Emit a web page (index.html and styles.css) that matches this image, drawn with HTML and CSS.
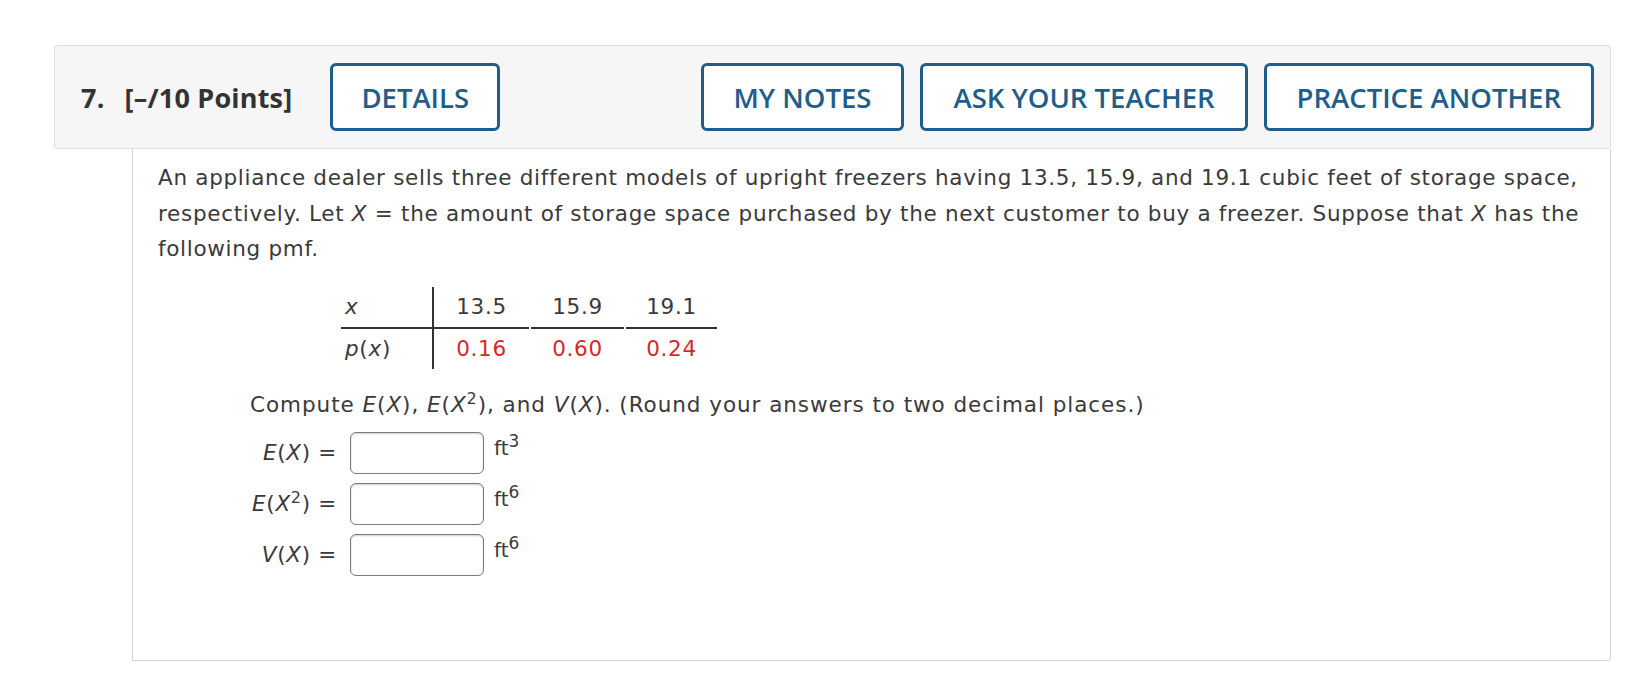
FILE: index.html
```html
<!DOCTYPE html>
<html lang="en">
<head>
<meta charset="utf-8">
<title>Question 7</title>
<link rel="stylesheet" href="styles.css">
</head>
<body>
<div class="page">
  <div class="qhead">
    <div class="qtitle"><span class="qnum">7.</span><span class="qpts">[–/10 Points]</span></div>
    <button class="btn btn-details">DETAILS</button>
    <div class="spacer"></div>
    <div class="btn-group">
      <button class="btn">MY NOTES</button>
      <button class="btn">ASK YOUR TEACHER</button>
      <button class="btn">PRACTICE ANOTHER</button>
    </div>
  </div>
  <div class="qbody">
    <p class="intro">An appliance dealer sells three different models of upright freezers having 13.5, 15.9, and 19.1 cubic feet of storage space, respectively. Let <i>X</i> = the amount of storage space purchased by the next customer to buy a freezer. Suppose that <i>X</i> has the following pmf.</p>
    <div class="pmf">
      <div class="cell c-label head"><i>x</i></div>
      <div class="cell c-first head">13.5</div>
      <div class="cell head">15.9</div>
      <div class="cell head">19.1</div>
      <div class="cell c-label"><i>p</i>(<i>x</i>)</div>
      <div class="cell c-first red">0.16</div>
      <div class="cell red">0.60</div>
      <div class="cell red">0.24</div>
    </div>
    <div class="compute">
      <p class="prompt">Compute <i>E</i>(<i>X</i>), <i>E</i>(<i>X</i><sup>2</sup>), and <i>V</i>(<i>X</i>). (Round your answers to two decimal places.)</p>
      <div class="answers">
        <span class="lbl"><i>E</i>(<i>X</i>) =</span>
        <span class="box"></span>
        <span class="unit">ft<sup>3</sup></span>
        <span class="lbl"><i>E</i>(<i>X</i><sup>2</sup>) =</span>
        <span class="box"></span>
        <span class="unit">ft<sup>6</sup></span>
        <span class="lbl"><i>V</i>(<i>X</i>) =</span>
        <span class="box"></span>
        <span class="unit">ft<sup>6</sup></span>
      </div>
    </div>
  </div>
</div>
</body>
</html>
```

FILE: styles.css
```css
html, body {
  margin: 0;
  padding: 0;
  background: #ffffff;
}

.page {
  padding: 45px 29px 0 54px;
}

.qhead {
  display: flex;
  align-items: center;
  height: 102px;
  padding: 0 16px 0 26px;
  background: #f6f6f6;
  border: 1px solid #dedede;
  border-radius: 3px;
  font-family: "Open Sans", "Liberation Sans", sans-serif;
}

.qtitle {
  font-size: 27px;
  font-weight: 700;
  color: #333333;
  display: flex;
  white-space: nowrap;
  letter-spacing: 0.2px;
}

.qnum {
  margin-right: 20px;
}

.spacer {
  flex: 1;
}

.btn-group {
  display: flex;
  gap: 16px;
}

.btn {
  font-family: "Open Sans", "Liberation Sans", sans-serif;
  font-size: 27.5px;
  font-weight: 600;
  color: #1f5d8b;
  background: #ffffff;
  border: 3px solid #1f5d8b;
  border-radius: 6px;
  height: 68px;
  padding: 0 30px;
  white-space: nowrap;
  letter-spacing: 0;
}

.btn-details {
  margin-left: 38px;
  padding: 0 28px;
}

.qbody {
  margin-left: 78px;
  height: 511px;
  border: 1px solid #d4d4d4;
  border-top: none;
  border-radius: 0 0 4px 0;
  padding: 0 10px 0 25px;
  color: #3a3a3a;
  font-family: "DejaVu Sans", Verdana, sans-serif;
  font-size: 21.5px;
  letter-spacing: 0.7px;
}

.intro {
  margin: 0;
  padding-top: 11px;
  line-height: 35.5px;
}

.pmf {
  display: grid;
  grid-template-columns: 91px 95px 93px 91px;
  column-gap: 2px;
  margin: 20px 0 0 183px;
  width: max-content;
}

.cell {
  height: 40px;
  display: flex;
  align-items: center;
  justify-content: center;
}

.cell.head {
  border-bottom: 2px solid #333333;
}

.c-label {
  justify-content: flex-start;
  padding-left: 4px;
  border-right: 2px solid #333333;
  margin-right: -2px;
}

.c-first {
  margin-left: -2px;
  padding-left: 2px;
}

.red {
  color: #d42a2a;
}

.compute {
  margin-left: 92px;
}

.prompt {
  margin: 18px 0 0 0;
  line-height: 36px;
  letter-spacing: 0.95px;
}

.prompt sup, .lbl sup {
  font-size: 16px;
  line-height: 0;
}

.answers {
  display: grid;
  grid-template-columns: auto 134px auto;
  justify-content: start;
  column-gap: 13px;
  row-gap: 9px;
  align-items: center;
  margin-top: 9px;
  padding-left: 2px;
}

.lbl {
  text-align: right;
  white-space: nowrap;
}

.box {
  display: block;
  height: 40px;
  border: 1px solid #7a7a7a;
  border-radius: 6px;
  background: #ffffff;
  box-shadow: inset 0 1px 2px rgba(0, 0, 0, 0.2);
}

.unit {
  align-self: start;
  margin-left: -3px;
  font-size: 20px;
  letter-spacing: 0;
  line-height: 32px;
}

.unit sup {
  font-size: 17px;
  line-height: 0;
}
```
